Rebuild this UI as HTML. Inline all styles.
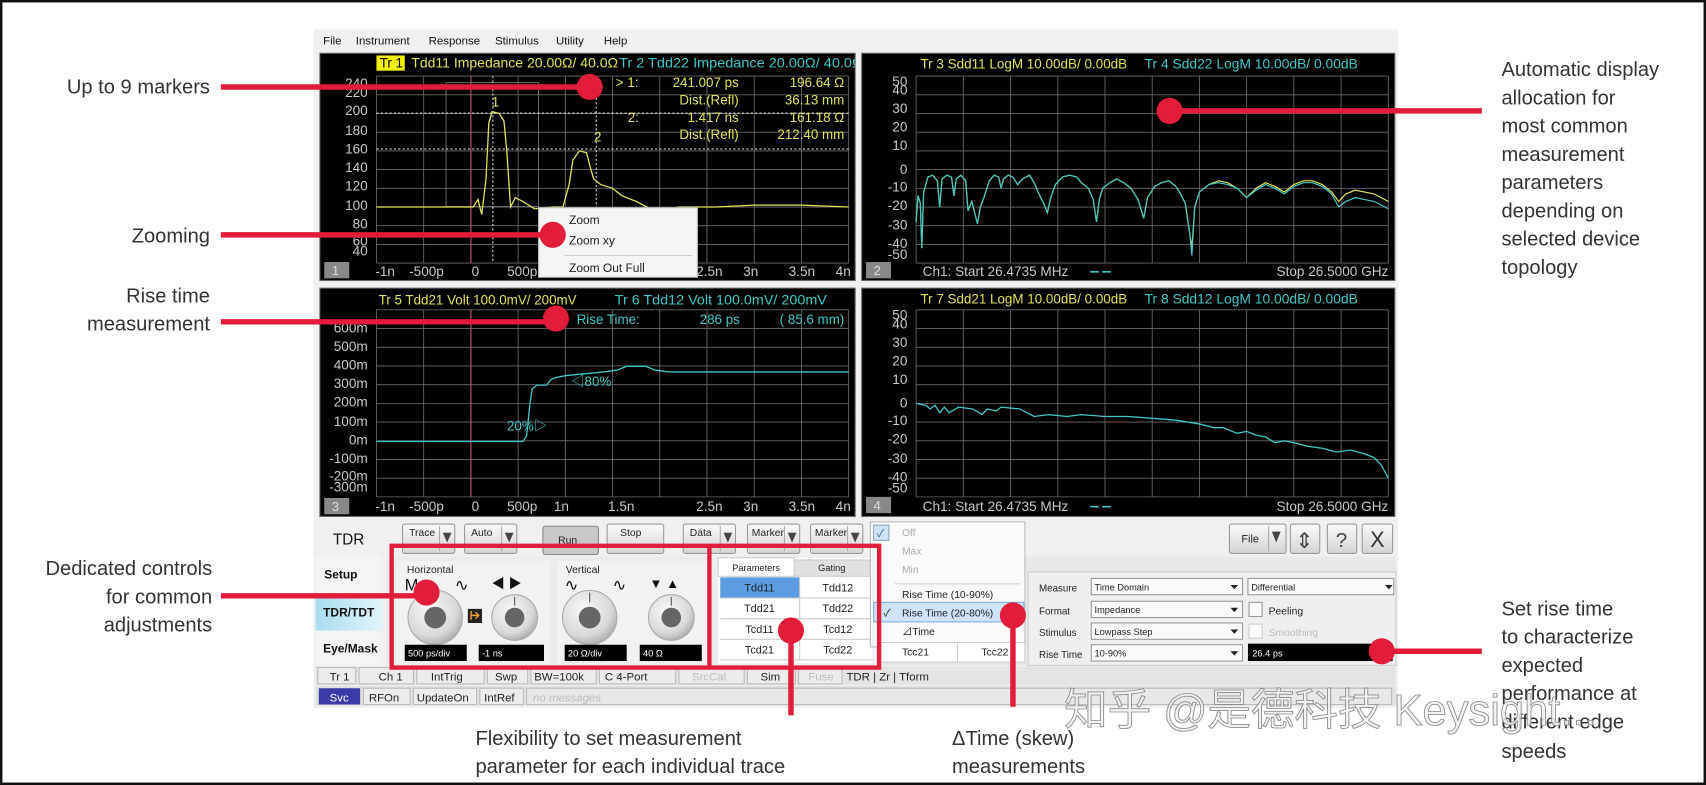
<!DOCTYPE html>
<html><head><meta charset="utf-8">
<style>
html,body{margin:0;padding:0;background:#fff;overflow:hidden}
svg{display:block}
text{font-family:"Liberation Sans","Noto Sans CJK SC",sans-serif}
.ann{fill:#333;font-size:18.5px}
.y{fill:#e2e25a}.c{fill:#40c8c8}
.ax{fill:#c8c8c8;font-size:12.5px}
.hd{font-size:12.3px}
.ui{font-size:10px;fill:#222}
</style></head><body>
<svg width="1706" height="785" viewBox="0 0 1568 722" preserveAspectRatio="none" xmlns="http://www.w3.org/2000/svg">
<defs>
<radialGradient id="kn" cx="40%" cy="35%" r="70%"><stop offset="0" stop-color="#fafafa"/><stop offset=".7" stop-color="#d8d8d8"/><stop offset="1" stop-color="#a8a8a8"/></radialGradient>
<linearGradient id="bt" x1="0" y1="0" x2="0" y2="1"><stop offset="0" stop-color="#fafafa"/><stop offset="1" stop-color="#d4d4d4"/></linearGradient>
<linearGradient id="tb" x1="0" y1="0" x2="1" y2="0"><stop offset="0" stop-color="#a8dcef"/><stop offset="1" stop-color="#e4f4fa"/></linearGradient>
<clipPath id="c1"><rect x="294" y="49" width="492" height="209"/></clipPath>
</defs>
<rect x="0" y="0" width="1568" height="722" fill="#fff"/>
<rect x="1" y="1" width="1566" height="720" fill="none" stroke="#111" stroke-width="2.5"/>

<rect x="288" y="27" width="997" height="624" fill="#f0f0f0"/>
<g font-size="10.5" fill="#111">
<text x="297" y="41">File</text><text x="327" y="41">Instrument</text><text x="394" y="41">Response</text><text x="455" y="41">Stimulus</text><text x="511" y="41">Utility</text><text x="555" y="41">Help</text>
</g>

<g fill="#000" stroke="#666" stroke-width="1">
<rect x="294" y="49" width="492" height="209"/><rect x="792" y="49" width="490" height="209"/>
<rect x="294" y="265" width="492" height="210"/><rect x="792" y="265" width="490" height="210"/>
</g>
<g stroke="#6a6a6a" stroke-width="0.8" fill="none">
<path id="g1" d="M346,70H780M346,87.2H780M346,104.4H780M346,121.6H780M346,138.8H780M346,156H780M346,173.2H780M346,190.4H780M346,207.6H780M346,224.8H780M346,242H780M346,70V242M389.4,70V242M432.8,70V242M476.2,70V242M519.6,70V242M563,70V242M606.4,70V242M649.8,70V242M693.2,70V242M736.6,70V242M780,70V242"/>
<use href="#g1" transform="translate(0,215)"/>
<use href="#g1" transform="translate(496,0)"/>
<use href="#g1" transform="translate(496,215)"/>
</g>
<path d="M432.8,70V242M432.8,285V457" stroke="#c0507a" stroke-width="1"/>

<!-- Panel 1 -->
<g clip-path="url(#c1)">
<rect x="346" y="51" width="26" height="14" fill="#f0f000"/>
<text x="349" y="62" class="hd" fill="#000">Tr 1</text>
<text x="378" y="62" class="hd y" textLength="190" lengthAdjust="spacingAndGlyphs">Tdd11 Impedance 20.00Ω/ 40.0Ω</text>
<text x="569" y="62" class="hd c" textLength="224" lengthAdjust="spacingAndGlyphs">Tr 2  Tdd22 Impedance 20.00Ω/ 40.0Ω</text>
</g>
<g class="ax" text-anchor="end">
<text x="338" y="81">240</text><text x="338" y="89">220</text><text x="338" y="106">200</text><text x="338" y="124">180</text><text x="338" y="141">160</text><text x="338" y="158">140</text><text x="338" y="175">120</text><text x="338" y="193">100</text><text x="338" y="210">80</text><text x="338" y="226">60</text><text x="338" y="235">40</text>
</g>
<g class="ax" text-anchor="middle">
<text x="354" y="254">-1n</text><text x="392" y="254">-500p</text><text x="437" y="254">0</text><text x="480" y="254">500p</text><text x="523" y="254">1n</text><text x="607" y="254">2n</text><text x="652" y="254">2.5n</text><text x="690" y="254">3n</text><text x="737" y="254">3.5n</text><text x="775" y="254">4n</text>
</g>
<rect x="298" y="241" width="23" height="15" fill="#888"/><text x="305" y="253" font-size="12" fill="#ddd">1</text>
<rect x="410" y="76" width="85" height="114" fill="none" stroke="#777" stroke-width="0.8"/>
<g stroke="#eee" stroke-width="0.9" stroke-dasharray="2,2" fill="none">
<path d="M346,104H780M346,137H780M453,70V242M548,70V242"/>
</g>
<g transform="translate(346,70) scale(4.34,1.72)">
<path vector-effect="non-scaling-stroke" fill="none" stroke="#e2e25a" stroke-width="1.3" d="M0,70 L20.5,70 L21.5,66 L22.3,74 L23.2,55 L23.8,25 L24.5,19 L26,20 L27,24 L27.6,40 L28.4,70 L29.4,65 L31,67 L33.5,71 L37.5,70 L39.5,70 L40.8,58 L41.6,45 L43,40 L44.5,41 L45.2,48 L46,55 L47.5,58 L50,60 L52,64 L55,67 L58,71 L61,72 L64,70 L72,70 L80,69 L90,69 L100,70"/>
</g>
<text x="452" y="98" class="hd y">1</text><text x="546" y="130" class="hd y">2</text>
<g class="hd y">
<text x="566" y="80">&gt; 1:</text><text x="679" y="80" text-anchor="end">241.007  ps</text><text x="776" y="80" text-anchor="end">196.64 Ω</text>
<text x="679" y="96" text-anchor="end">Dist.(Refl)</text><text x="776" y="96" text-anchor="end">36.13 mm</text>
<text x="577" y="112">2:</text><text x="679" y="112" text-anchor="end">1.417  ns</text><text x="776" y="112" text-anchor="end">161.18 Ω</text>
<text x="679" y="128" text-anchor="end">Dist.(Refl)</text><text x="776" y="128" text-anchor="end">212.40 mm</text>
</g>
<rect x="495" y="191" width="146" height="64" fill="#f5f5f5" stroke="#bbb"/>
<g font-size="11" fill="#222"><text x="523" y="206">Zoom</text><text x="523" y="225">Zoom xy</text><text x="523" y="250">Zoom Out Full</text></g>
<path d="M519,235H636" stroke="#ccc"/>

<!-- Panel 3 -->
<text x="348" y="280" class="hd y" textLength="182" lengthAdjust="spacingAndGlyphs">Tr 5  Tdd21 Volt 100.0mV/ 200mV</text>
<text x="565" y="280" class="hd c" textLength="195" lengthAdjust="spacingAndGlyphs">Tr 6  Tdd12 Volt 100.0mV/ 200mV</text>
<g class="hd c"><text x="530" y="298">Rise Time:</text><text x="680" y="298" text-anchor="end">286 ps</text><text x="776" y="298" text-anchor="end">( 85.6 mm)</text></g>
<g class="ax" text-anchor="end">
<text x="338" y="306">600m</text><text x="338" y="323">500m</text><text x="338" y="340">400m</text><text x="338" y="357">300m</text><text x="338" y="374">200m</text><text x="338" y="392">100m</text><text x="338" y="409">0m</text><text x="338" y="426">-100m</text><text x="338" y="442">-200m</text><text x="338" y="452">-300m</text>
</g>
<g class="ax" text-anchor="middle">
<text x="354" y="470">-1n</text><text x="392" y="470">-500p</text><text x="437" y="470">0</text><text x="480" y="470">500p</text><text x="516" y="470">1n</text><text x="571" y="470">1.5n</text><text x="652" y="470">2.5n</text><text x="690" y="470">3n</text><text x="737" y="470">3.5n</text><text x="775" y="470">4n</text>
</g>
<rect x="298" y="458" width="23" height="15" fill="#888"/><text x="305" y="470" font-size="12" fill="#ddd">3</text>
<g transform="translate(346,285) scale(4.34,1.73)">
<path vector-effect="non-scaling-stroke" fill="none" stroke="#40c8c8" stroke-width="1.3" d="M0,70 L31,70 L31.8,67 L32.5,50 L33,42 L34,40 L36,40 L37,37 L38,36 L40,35 L44,34 L48,33 L51,32 L53,30 L57,30 L59,32 L62,33 L70,33 L80,33 L90,33 L100,33"/>
</g>
<text x="466" y="396" class="hd c">20%▷</text><text x="525" y="355" class="hd c">◁80%</text>

<!-- Panel 2 -->
<text x="846" y="63" class="hd y" textLength="190" lengthAdjust="spacingAndGlyphs">Tr 3   Sdd11 LogM 10.00dB/  0.00dB</text>
<text x="1052" y="63" class="hd c" textLength="196" lengthAdjust="spacingAndGlyphs">Tr 4   Sdd22 LogM 10.00dB/  0.00dB</text>
<g class="ax" text-anchor="end" id="yl2">
<text x="834" y="79">50</text><text x="834" y="87">40</text><text x="834" y="104">30</text><text x="834" y="121">20</text><text x="834" y="138">10</text><text x="834" y="160">0</text><text x="834" y="176">-10</text><text x="834" y="193">-20</text><text x="834" y="211">-30</text><text x="834" y="228">-40</text><text x="834" y="238">-50</text>
</g>
<rect x="796" y="241" width="23" height="15" fill="#888"/><text x="803" y="253" font-size="12" fill="#ddd">2</text>
<text x="848" y="254" class="ax">Ch1:  Start  26.4735 MHz</text><path d="M1002,250h8M1013,250h8" stroke="#40c8c8" stroke-width="1.5"/>
<text x="1276" y="254" class="ax" text-anchor="end">Stop  26.5000 GHz</text>
<g transform="translate(842,70) scale(4.34,1.72)" fill="none" stroke-width="1.2">
<path vector-effect="non-scaling-stroke" stroke="#e2e25a" d="M0,78 L0.4,64 L0.9,68 L1.2,92 L1.6,62 L2.5,54 L3.5,53 L4.5,56 L5,70 L5.5,55 L6.5,53 L7.5,54 L8,64 L8.5,55 L9.5,53 L10.5,56 L11,72 L11.8,67 L12.5,74 L13,79 L13.6,70 L14.5,64 L15.5,56 L16.5,53 L17.5,54 L18,60 L18.5,55 L19.5,53 L20.5,54 L21.5,58 L22.5,55 L24,53 L25,57 L26,63 L27,68 L27.8,73 L28.5,65 L29.5,58 L31,54 L32.5,53 L34,54 L35,57 L36.5,60 L37.5,66 L38.2,78 L38.8,66 L39.5,60 L41,57 L42.5,55 L44,57 L45.5,60 L47,66 L48.2,76 L49,65 L50.5,59 L52,57 L53.5,56 L55,59 L56,63 L57,68 L58,85 L58.4,92 L59,70 L60,62 L62,58 L64,56 L66,57 L68,60 L70,65 L72,60 L74,57 L76,59 L78,62 L80,58 L82,56 L84,56 L86,58 L88,62 L89.5,67 L91,63 L93,61 L95,62 L97,63 L100,67"/>
<path vector-effect="non-scaling-stroke" stroke="#40c8c8" d="M0,78 L0.4,64 L0.9,68 L1.2,92 L1.6,62 L2.5,54 L3.5,53 L4.5,56 L5,70 L5.5,55 L6.5,53 L7.5,54 L8,64 L8.5,55 L9.5,53 L10.5,56 L11,72 L11.8,67 L12.5,74 L13,79 L13.6,70 L14.5,64 L15.5,56 L16.5,53 L17.5,54 L18,60 L18.5,55 L19.5,53 L20.5,54 L21.5,58 L22.5,55 L24,53 L25,57 L26,63 L27,68 L27.8,73 L28.5,65 L29.5,58 L31,54 L32.5,53 L34,54 L35,57 L36.5,60 L37.5,66 L38.2,78 L38.8,66 L39.5,60 L41,57 L42.5,55 L44,57 L45.5,60 L47,66 L48.2,76 L49,65 L50.5,59 L52,57 L53.5,56 L55,59 L56,63 L57,68 L58,85 L58.4,96 L59,70 L60,62 L62,58 L64,57 L66,58 L68,60 L70,65 L72,61 L74,58 L76,60 L78,63 L80,59 L82,57 L84,57 L86,59 L88,63 L89.5,70 L91,67 L93,65 L95,66 L97,67 L100,71"/>
</g>
<!-- Panel 4 -->
<text x="846" y="279" class="hd y" textLength="190" lengthAdjust="spacingAndGlyphs">Tr 7   Sdd21 LogM 10.00dB/  0.00dB</text>
<text x="1052" y="279" class="hd c" textLength="196" lengthAdjust="spacingAndGlyphs">Tr 8   Sdd12 LogM 10.00dB/  0.00dB</text>
<use href="#yl2" transform="translate(0,215)"/>
<rect x="796" y="457" width="23" height="15" fill="#888"/><text x="803" y="469" font-size="12" fill="#ddd">4</text>
<text x="848" y="470" class="ax">Ch1:  Start  26.4735 MHz</text><path d="M1002,466h8M1013,466h8" stroke="#40c8c8" stroke-width="1.5"/>
<text x="1276" y="470" class="ax" text-anchor="end">Stop  26.5000 GHz</text>
<g transform="translate(842,285) scale(4.34,1.72)" fill="none">
<path vector-effect="non-scaling-stroke" stroke="#40c8c8" stroke-width="1.3" d="M0,50 L2,51 L3,53 L4,51 L5,55 L6,52 L7,55 L9,52 L12,53 L14,56 L15,53 L17,54 L18,52 L22,53 L25,57 L28,56 L32,57 L35,56 L40,57 L45,57 L50,58 L55,59 L60,61 L63,63 L65,63 L68,66 L70,65 L72,67 L74,68 L76,71 L78,70 L80,71 L83,73 L86,74 L89,76 L92,75 L95,77 L97,79 L98.5,83 L100,90"/>
</g>

<!-- toolbar -->
<text x="306" y="501" font-size="14" fill="#111">TDR</text>
<g font-size="9.5" fill="#222">
<g id="b1"><rect x="370" y="482" width="48" height="27" rx="2" fill="url(#bt)" stroke="#999"/><path d="M404,484V507" stroke="#aaa"/><path d="M407,490h8l-4,9z" fill="#444"/></g>
<text x="376" y="493">Trace</text>
<use href="#b1" transform="translate(57,0)"/><text x="433" y="493">Auto</text>
<rect x="499" y="484" width="51" height="26" rx="2" fill="#c8c8c8" stroke="#888"/><text x="513" y="500">Run</text>
<rect x="558" y="482" width="52" height="27" rx="2" fill="url(#bt)" stroke="#999"/><text x="570" y="493">Stop</text>
<use href="#b1" transform="translate(258,0)"/><text x="634" y="493">Data</text>
<use href="#b1" transform="translate(317,0)"/><text x="691" y="493">Marker</text>
<use href="#b1" transform="translate(375,0)"/><text x="749" y="493">Marker</text>
</g>
<g fill="url(#bt)" stroke="#999">
<rect x="1130" y="482" width="52" height="27" rx="2"/><rect x="1186" y="482" width="27" height="27" rx="2"/><rect x="1220" y="482" width="27" height="27" rx="2"/><rect x="1252" y="482" width="28" height="27" rx="2"/>
</g>
<text x="1141" y="499" font-size="10" fill="#222">File</text><path d="M1166,484V507" stroke="#aaa"/><path d="M1169,489h8l-4,10z" fill="#444"/>
<text x="1199" y="504" font-size="20" fill="#444" text-anchor="middle">⇕</text>
<text x="1233" y="503" font-size="19" fill="#444" text-anchor="middle">?</text>
<text x="1266" y="503" font-size="20" fill="#333" text-anchor="middle">X</text>

<rect x="290" y="512" width="60" height="34" fill="#f4f4f4"/>
<rect x="290" y="546" width="62" height="34" fill="url(#tb)"/>
<rect x="290" y="580" width="60" height="32" fill="#f4f4f4"/>
<g font-size="11" font-weight="bold" fill="#111"><text x="298" y="532">Setup</text><text x="297" y="567">TDR/TDT</text><text x="297" y="600">Eye/Mask</text></g>

<rect x="355" y="512" width="450" height="100" fill="#ececec"/>
<rect x="365" y="516" width="140" height="94" fill="#f2f2f2"/><rect x="512" y="516" width="138" height="94" fill="#f2f2f2"/>
<g font-size="9.5" fill="#222"><text x="374" y="527">Horizontal</text><text x="520" y="527">Vertical</text></g>
<g font-size="15" fill="#111"><text x="372" y="543">M</text><text x="418" y="543">∿</text><text x="452" y="541" font-size="12">◀ ▶</text><text x="519" y="543">∿</text><text x="563" y="543">∿</text><text x="597" y="541" font-size="12">▼ ▲</text></g>
<g>
<circle cx="400" cy="568" r="25" fill="url(#kn)" stroke="#aaa"/><circle cx="400" cy="568" r="10" fill="#666"/>
<circle cx="473" cy="568" r="21" fill="url(#kn)" stroke="#aaa"/><circle cx="473" cy="568" r="9" fill="#666"/><path d="M473,549v8" stroke="#555"/>
<circle cx="542" cy="568" r="25" fill="url(#kn)" stroke="#aaa"/><circle cx="542" cy="568" r="10" fill="#666"/><path d="M542,545v9" stroke="#555"/>
<circle cx="617" cy="568" r="21" fill="url(#kn)" stroke="#aaa"/><circle cx="617" cy="568" r="9" fill="#666"/><path d="M617,549v8" stroke="#555"/>
<rect x="430" y="560" width="13" height="13" fill="#222"/><path d="M433,566h7m-3,-3l3,3l-3,3M433,562v8" stroke="#f0a030" fill="none" stroke-width="1.3"/>
</g>
<g fill="#000"><rect x="372" y="593" width="57" height="15"/><rect x="440" y="593" width="60" height="15"/><rect x="519" y="593" width="57" height="15"/><rect x="588" y="593" width="57" height="15"/></g>
<g font-size="8.5" fill="#fff"><text x="375" y="604">500 ps/div</text><text x="443" y="604">-1 ns</text><text x="522" y="604">20 Ω/div</text><text x="591" y="604">40 Ω</text></g>
<rect x="660" y="513" width="145" height="97" fill="#fff"/>
<rect x="660" y="513" width="70" height="17" fill="#fff" stroke="#ccc"/><rect x="730" y="515" width="70" height="15" fill="#e0e0e0" stroke="#ccc"/>
<g font-size="8.5" fill="#222"><text x="673" y="525">Parameters</text><text x="752" y="525">Gating</text></g>
<rect x="662" y="531" width="73" height="19" fill="#5b9de0"/>
<g stroke="#ccc" fill="none"><path d="M662,550H804M662,569H804M662,588H804M662,607H804M735,531V607"/></g>
<g font-size="10" fill="#222" text-anchor="middle">
<text x="698" y="544">Tdd11</text><text x="770" y="544">Tdd12</text><text x="698" y="563">Tdd21</text><text x="770" y="563">Tdd22</text><text x="698" y="582">Tcd11</text><text x="770" y="582">Tcd12</text><text x="698" y="601">Tcd21</text><text x="770" y="601">Tcd22</text>
</g>

<rect x="805" y="512" width="478" height="100" fill="#e8e8e8"/>
<rect x="945" y="526" width="338" height="86" fill="#efefef" stroke="#ccc"/>
<g font-size="9" fill="#222"><text x="955" y="544">Measure</text><text x="955" y="565">Format</text><text x="955" y="585">Stimulus</text><text x="955" y="605">Rise Time</text></g>
<g fill="#fafafa" stroke="#999"><rect x="1003" y="532" width="139" height="15"/><rect x="1003" y="553" width="139" height="15"/><rect x="1003" y="573" width="139" height="15"/><rect x="1003" y="593" width="139" height="15"/><rect x="1147" y="532" width="134" height="15"/><rect x="1148" y="554" width="12" height="13"/><rect x="1148" y="574" width="12" height="13" stroke="#ccc"/></g>
<g fill="#222"><path d="M1131,538h7l-3.5,4z"/><path d="M1131,559h7l-3.5,4z"/><path d="M1131,579h7l-3.5,4z"/><path d="M1131,599h7l-3.5,4z"/><path d="M1273,538h7l-3.5,4z"/></g>
<g font-size="8.5" fill="#222"><text x="1006" y="543">Time Domain</text><text x="1006" y="564">Impedance</text><text x="1006" y="584">Lowpass Step</text><text x="1006" y="604">10-90%</text><text x="1150" y="543">Differential</text><text x="1166" y="565" font-size="9.5">Peeling</text><text x="1166" y="585" font-size="9.5" fill="#bbb">Smoothing</text></g>
<rect x="1147" y="592" width="133" height="16" fill="#000"/><text x="1151" y="604" font-size="8.5" fill="#fff">26.4 ps</text>

<rect x="800" y="480" width="142" height="115" fill="#fafafa" stroke="#bbb"/>
<rect x="803" y="483" width="14" height="14" fill="#cfe3f7" stroke="#8ab"/><text x="806" y="494" font-size="10" fill="#369">✓</text>
<g font-size="9.5"><text x="829" y="493" fill="#aaa">Off</text><text x="829" y="510" fill="#aaa">Max</text><text x="829" y="527" fill="#aaa">Min</text></g>
<path d="M822,537H938" stroke="#ccc"/>
<rect x="803" y="554" width="138" height="18" fill="#cde4fa" stroke="#7ab0e0"/>
<g font-size="9.5" fill="#222"><text x="829" y="550">Rise Time (10-90%)</text><text x="829" y="567">Rise Time (20-80%)</text><text x="829" y="584">⊿Time</text><text x="812" y="567">✓</text></g>
<rect x="808" y="591" width="134" height="18" fill="#fff" stroke="#ccc"/><path d="M880,591v18" stroke="#ccc"/>
<g font-size="9.5" fill="#222"><text x="829" y="603">Tcc21</text><text x="902" y="603">Tcc22</text></g>

<rect x="290" y="613" width="993" height="17" fill="#e4e4e4"/>
<g fill="#ececec" stroke="#bbb">
<rect x="292" y="614" width="35" height="15"/><rect x="330" y="614" width="50" height="15"/><rect x="383" y="614" width="62" height="15"/><rect x="448" y="614" width="37" height="15"/><rect x="488" y="614" width="60" height="15"/><rect x="551" y="614" width="70" height="15"/><rect x="624" y="614" width="60" height="15"/><rect x="687" y="614" width="44" height="15"/><rect x="734" y="614" width="40" height="15"/>
</g>
<g font-size="10.5" fill="#222"><text x="303" y="626">Tr 1</text><text x="348" y="626">Ch 1</text><text x="396" y="626">IntTrig</text><text x="455" y="626">Swp</text><text x="491" y="626">BW=100k</text><text x="556" y="626">C  4-Port</text><text x="636" y="626" fill="#bbb">SrcCal</text><text x="699" y="626">Sim</text><text x="743" y="626" fill="#bbb">Fuse</text><text x="778" y="626">TDR | Zr | Tform</text></g>
<rect x="290" y="631" width="993" height="18" fill="#e0e0e0"/>
<rect x="293" y="633" width="38" height="15" fill="#3b3ba8"/><text x="303" y="645" font-size="10.5" fill="#fff">Svc</text>
<g fill="#ececec" stroke="#bbb"><rect x="334" y="633" width="43" height="15"/><rect x="380" y="633" width="58" height="15"/><rect x="441" y="633" width="40" height="15"/><rect x="484" y="633" width="795" height="15" fill="#e8e8e8"/></g>
<g font-size="10.5" fill="#222"><text x="339" y="645">RFOn</text><text x="383" y="645">UpdateOn</text><text x="445" y="645">IntRef</text><text x="490" y="645" fill="#bbb" font-style="italic">no messages</text></g>

<g fill="none" stroke="#e11d3a" stroke-width="4">
<rect x="360" y="502" width="448" height="112"/><path d="M652,502V614"/>
</g>
<g stroke="#e11d3a" stroke-width="5" fill="none">
<path d="M203,80H542M203,216H508M203,296H511M203,548H392M1075,102H1362M1270,599H1362M727,580V658M931,566V650"/>
</g>
<g fill="#e11d3a">
<circle cx="542" cy="80" r="12"/><circle cx="508" cy="216" r="12"/><circle cx="511" cy="293" r="12"/><circle cx="392" cy="545" r="12"/><circle cx="1075" cy="102" r="12"/><circle cx="1270" cy="599" r="12"/><circle cx="727" cy="580" r="12"/><circle cx="931" cy="566" r="12"/>
</g>
<g class="ann" text-anchor="end">
<text x="193" y="86">Up to 9 markers</text>
<text x="193" y="223">Zooming</text>
<text x="193" y="278">Rise time</text><text x="193" y="304">measurement</text>
<text x="195" y="529">Dedicated controls</text><text x="195" y="555">for common</text><text x="195" y="581">adjustments</text>
</g>
<g class="ann">
<text x="1380" y="70">Automatic display</text><text x="1380" y="96">allocation for</text><text x="1380" y="122">most common</text><text x="1380" y="148">measurement</text><text x="1380" y="174">parameters</text><text x="1380" y="200">depending on</text><text x="1380" y="226">selected device</text><text x="1380" y="252">topology</text>
<text x="1380" y="566">Set rise time</text><text x="1380" y="592">to characterize</text><text x="1380" y="618">expected</text><text x="1380" y="644">performance at</text><text x="1380" y="670">different edge</text><text x="1380" y="697">speeds</text>
<text x="437" y="685">Flexibility to set measurement</text><text x="437" y="711">parameter for each individual trace</text>
<text x="875" y="685">ΔTime (skew)</text><text x="875" y="711">measurements</text>
</g>
<text x="978" y="667" font-size="40" fill="#f2f2f2" fill-opacity="0.85" stroke="#8a8a8a" stroke-width="0.8">知乎 @是德科技 Keysight...</text>
</svg>
</body></html>
